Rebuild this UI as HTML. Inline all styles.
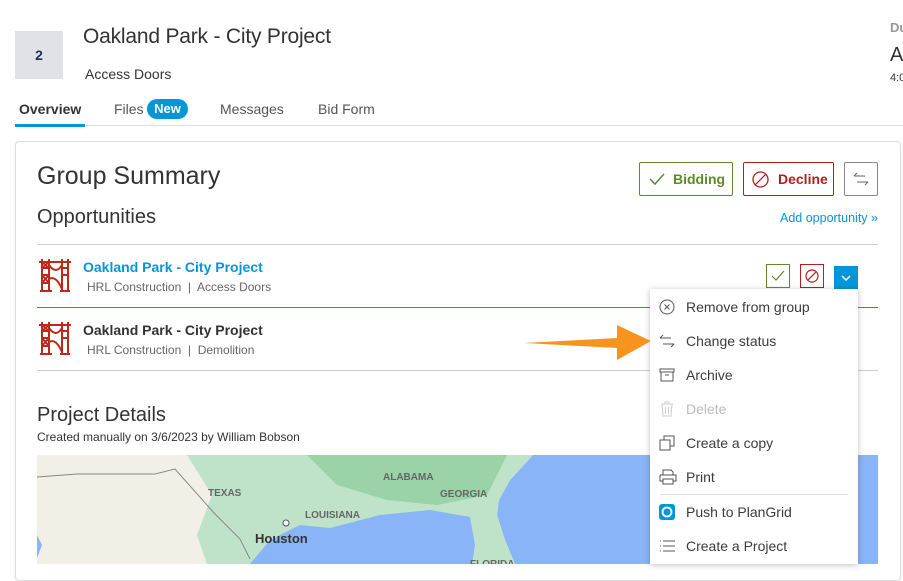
<!DOCTYPE html>
<html><head><style>
*{margin:0;padding:0;box-sizing:border-box}
body{width:903px;height:564px;overflow:hidden;background:#fff;font-family:"Liberation Sans",sans-serif;color:#3c3c3c;position:relative}
.a{position:absolute;white-space:nowrap}
.btn{position:absolute;border:1px solid;border-radius:2px;background:#fff;font-weight:bold;font-size:14px;display:flex;align-items:center}
.mi{position:absolute;left:650px;width:208px;height:34px;display:flex;align-items:center;font-size:14px;color:#3c3c3c}
.mi svg{position:absolute;left:9px}
.mi span{position:absolute;left:36px}
</style></head><body>
<div class="a" style="left:15px;top:31px;width:48px;height:48px;background:#dfe2e7;color:#1c3557;font-weight:bold;font-size:14px;text-align:center;line-height:48px">2</div>
<div class="a" style="left:83px;top:25px;font-size:21px;color:#333;letter-spacing:-0.2px">Oakland Park - City Project</div>
<div class="a" style="left:85px;top:66px;font-size:14px;color:#333">Access Doors</div>
<div class="a" style="left:890px;top:20px;font-size:13px;color:#999;font-weight:bold">Du</div>
<div class="a" style="left:890px;top:44px;font-size:20px;color:#333">A</div>
<div class="a" style="left:890px;top:72px;font-size:11px;color:#333">4:0</div>
<div class="a" style="left:19px;top:101px;font-size:14px;color:#333;font-weight:bold">Overview</div>
<div class="a" style="left:114px;top:101px;font-size:14px;color:#555">Files</div>
<div class="a" style="left:147px;top:99px;width:41px;height:20px;border-radius:10px;background:#0696d7;color:#fff;font-size:13px;font-weight:bold;text-align:center;line-height:20px">New</div>
<div class="a" style="left:220px;top:101px;font-size:14px;color:#555">Messages</div>
<div class="a" style="left:318px;top:101px;font-size:14px;color:#555">Bid Form</div>
<div class="a" style="left:15px;top:125px;width:888px;height:1px;background:#ddd"></div>
<div class="a" style="left:15px;top:124px;width:70px;height:3px;background:#0696d7"></div>

<div class="a" style="left:15px;top:141px;width:886px;height:440px;border:1px solid #ddd;border-radius:4px;box-shadow:0 1px 3px rgba(0,0,0,.08)"></div>
<div class="a" style="left:37px;top:162px;font-size:25px;color:#333">Group Summary</div>
<div class="a" style="left:37px;top:206px;font-size:20px;color:#333">Opportunities</div>
<div class="btn" style="left:639px;top:162px;width:94px;height:34px;border-color:#5e8a2e;color:#5e8a2e"><svg style="margin:0 8px 0 9px" width="16" height="14" viewBox="0 0 16 14"><path d="M1 7l5 5L15 2" fill="none" stroke="#5e8a2e" stroke-width="1.5"/></svg>Bidding</div>
<div class="btn" style="left:743px;top:162px;width:91px;height:34px;border-color:#b11e1e;color:#b11e1e"><svg style="margin:0 9px 0 8px" width="17" height="17" viewBox="0 0 17 17"><circle cx="8.5" cy="8.5" r="7.5" fill="none" stroke="#b11e1e" stroke-width="1.3"/><path d="M3.2 13.8L13.8 3.2" stroke="#b11e1e" stroke-width="1.3"/></svg>Decline</div>
<div class="btn" style="left:844px;top:162px;width:34px;height:34px;border-color:#888;justify-content:center"><svg width="16" height="14" viewBox="0 0 16 14"><path d="M1 4h11M1 4l3-3M15 10H4M15 10l-3 3" fill="none" stroke="#666" stroke-width="1"/></svg></div>
<div class="a" style="right:25px;top:211px;font-size:12.5px;color:#0696d7">Add opportunity »</div>
<div class="a" style="left:37px;top:244px;width:841px;height:1px;background:#ccc"></div>

<svg class="a" style="left:38px;top:257px" width="34" height="36" viewBox="0 0 34 36"><g fill="none" stroke="#c0281c" stroke-width="2"><path d="M4 2v32M11 2v32M24 2v32M30 2v32M1 5h32M4 11h7M24 11h6M4 18h7M24 18h6M4 26h7M2 34h12M22 34h10M4 5l7 6M11 5l-7 6M4 18l7 8M11 18l-7 8M11 8q7 10 13 0M11 22q7 -4 13 10"/></g></svg>
<div class="a" style="left:83px;top:259px;font-size:14px;font-weight:bold;color:#0696d7">Oakland Park - City Project</div>
<div class="a" style="left:87px;top:280px;font-size:12px;color:#666">HRL Construction &nbsp;|&nbsp; Access Doors</div>
<div class="a" style="left:37px;top:307px;width:841px;height:1px;background:#0696d7"></div>
<svg class="a" style="left:38px;top:320px" width="34" height="36" viewBox="0 0 34 36"><g fill="none" stroke="#c0281c" stroke-width="2"><path d="M4 2v32M11 2v32M24 2v32M30 2v32M1 5h32M4 11h7M24 11h6M4 18h7M24 18h6M4 26h7M2 34h12M22 34h10M4 5l7 6M11 5l-7 6M4 18l7 8M11 18l-7 8M11 8q7 10 13 0M11 22q7 -4 13 10"/></g></svg>
<div class="a" style="left:83px;top:322px;font-size:14px;font-weight:bold;color:#333">Oakland Park - City Project</div>
<div class="a" style="left:87px;top:343px;font-size:12px;color:#666">HRL Construction &nbsp;|&nbsp; Demolition</div>
<div class="a" style="left:37px;top:370px;width:841px;height:1px;background:#ccc"></div>

<div class="a" style="left:766px;top:264px;width:24px;height:24px;border:1px solid #5e8a2e;display:flex;align-items:center;justify-content:center"><svg width="14" height="12" viewBox="0 0 14 12"><path d="M1 6l4 4L13 1" fill="none" stroke="#5e8a2e" stroke-width="1.2"/></svg></div>
<div class="a" style="left:800px;top:264px;width:24px;height:24px;border:1px solid #b11e1e;display:flex;align-items:center;justify-content:center"><svg width="14" height="14" viewBox="0 0 14 14"><circle cx="7" cy="7" r="6" fill="none" stroke="#b11e1e" stroke-width="1.2"/><path d="M2.8 11.2L11.2 2.8" stroke="#b11e1e" stroke-width="1.2"/></svg></div>
<div class="a" style="left:834px;top:266px;width:24px;height:24px;background:#0696d7;display:flex;align-items:center;justify-content:center"><svg width="10" height="6" viewBox="0 0 10 6"><path d="M1 1l4 4 4-4" fill="none" stroke="#fff" stroke-width="1.5"/></svg></div>

<div class="a" style="left:37px;top:404px;font-size:20px;color:#333">Project Details</div>
<div class="a" style="left:37px;top:430px;font-size:12px;color:#333">Created manually on 3/6/2023 by William Bobson</div>

<svg class="a" style="left:37px;top:455px" width="841" height="109" viewBox="0 0 841 109">
<rect width="841" height="109" fill="#8ab4f8"/>
<path d="M0 0H496L473 25 462 45 460 60 468 85 478 109H0Z" fill="#f2efe6"/>
<path d="M150 0H496L473 25 462 45 460 60 468 85 478 109H170L160 80 175 40Z" fill="#bfe3c8"/>
<path d="M270 0H470L450 40 400 50 350 45 300 30Z" fill="#9ad3a8"/>
<path d="M0 103L5 90 0 80Z" fill="#8ab4f8"/>
<path d="M0 22l40-3h60l18 0 20 -5 40 45 25 25 10 20" fill="none" stroke="#888" stroke-width="1"/>
<path d="M213 109L233 85 263 70 293 73 343 60 393 55 433 62 438 90 435 109Z" fill="#8ab4f8"/>
<text x="171" y="41" font-size="10" font-weight="bold" fill="#666" font-family="Liberation Sans">TEXAS</text>
<text x="346" y="25" font-size="10" font-weight="bold" fill="#666" font-family="Liberation Sans">ALABAMA</text>
<text x="403" y="42" font-size="10" font-weight="bold" fill="#666" font-family="Liberation Sans">GEORGIA</text>
<text x="268" y="63" font-size="10" font-weight="bold" fill="#666" font-family="Liberation Sans">LOUISIANA</text>
<text x="433" y="112" font-size="10" font-weight="bold" fill="#666" font-family="Liberation Sans">FLORIDA</text>
<circle cx="249" cy="68" r="3" fill="#fff" stroke="#555"/>
<text x="218" y="88" font-size="13" font-weight="bold" fill="#333" font-family="Liberation Sans">Houston</text>
</svg>

<div class="a" style="left:650px;top:289px;width:208px;height:275px;background:#fff;box-shadow:0 1px 6px rgba(0,0,0,.25)"></div>
<div class="mi" style="top:290px"><svg width="16" height="16" viewBox="0 0 16 16"><circle cx="8" cy="8" r="7" fill="none" stroke="#555"/><path d="M5.5 5.5l5 5M10.5 5.5l-5 5" stroke="#555"/></svg><span>Remove from group</span></div>
<div class="mi" style="top:324px"><svg width="16" height="14" viewBox="0 0 16 14"><path d="M1 4h11M1 4l3-3M15 10H4M15 10l-3 3" fill="none" stroke="#555"/></svg><span>Change status</span></div>
<div class="mi" style="top:358px"><svg width="16" height="16" viewBox="0 0 16 16"><path d="M1 2h14v3H1zM2 5v9h12V5M6 8h4" fill="none" stroke="#555"/></svg><span>Archive</span></div>
<div class="mi" style="top:392px;color:#bbb"><svg width="16" height="16" viewBox="0 0 16 16"><path d="M2 3h12M6 3V1h4v2M3 3l1 12h8l1-12M6.5 6v7M9.5 6v7" fill="none" stroke="#ccc"/></svg><span>Delete</span></div>
<div class="mi" style="top:426px"><svg width="16" height="16" viewBox="0 0 16 16"><path d="M1 5h10v10H1zM5 5V1h10v10h-4" fill="none" stroke="#555"/></svg><span>Create a copy</span></div>
<div class="mi" style="top:460px"><svg width="18" height="16" viewBox="0 0 18 16"><path d="M4 6V1h8l2 2v3M1 6h16v6h-3M4 12H1V6M4 10h10v5H4z" fill="none" stroke="#555"/></svg><span>Print</span></div>
<div class="a" style="left:660px;top:494px;width:188px;height:1px;background:#ddd"></div>
<div class="mi" style="top:495px"><svg width="16" height="16" viewBox="0 0 16 16"><rect width="16" height="16" rx="3" fill="#0696d7"/><circle cx="8" cy="8" r="4.5" fill="none" stroke="#fff" stroke-width="1.8"/></svg><span>Push to PlanGrid</span></div>
<div class="mi" style="top:529px"><svg width="16" height="14" viewBox="0 0 16 14"><path d="M1 2h1M1 7h1M1 12h1M4 2h12M4 7h12M4 12h12" stroke="#555"/></svg><span>Create a Project</span></div>

<svg class="a" style="left:522px;top:322px" width="132" height="40" viewBox="0 0 132 40"><path d="M2 21L95 16V3L129 19 95 38V26Z" fill="#f7941d"/></svg>
</body></html>
